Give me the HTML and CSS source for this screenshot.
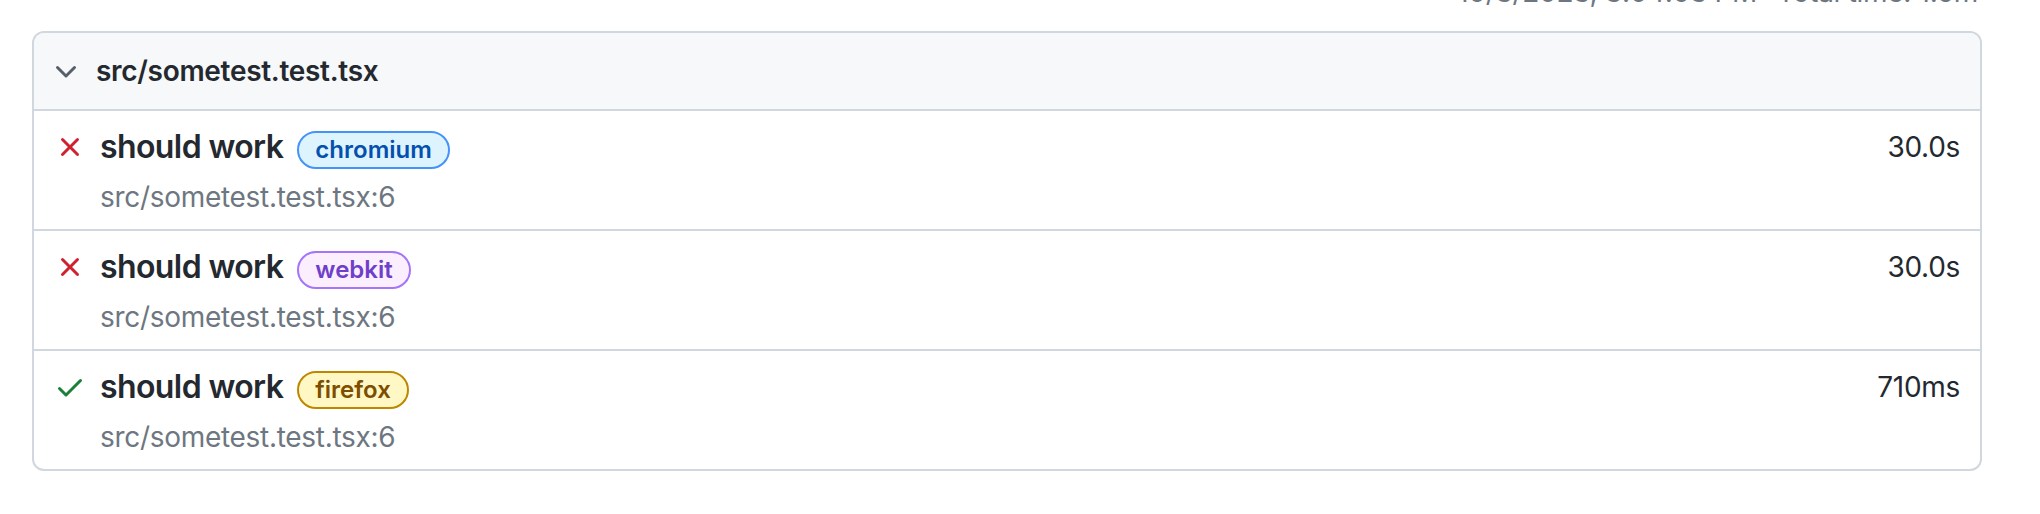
FILE: index.html
```html
<!DOCTYPE html>
<html lang="en">
<head>
<meta charset="utf-8">
<title>Test report</title>
<link rel="stylesheet" href="styles.css">
</head>
<body>
<div class="report">
  <div class="topbar">
    <span class="overall-time">10/3/2023, 3:04:03 PM</span>
    <span class="overall-duration">Total time: 1.6m</span>
  </div>
  <div class="file">
    <div class="file-header">
      <svg class="octicon chevron" viewBox="0 0 16 16" width="32" height="32"><path d="M12.78 5.22a.749.749 0 0 1 0 1.06l-4.25 4.25a.749.749 0 0 1-1.06 0L3.220 6.28a.749.749 0 1 1 1.060-1.06L8 8.939l3.72-3.719a.749.749 0 0 1 1.06 0Z"/></svg>
      <span class="file-name">src/sometest.test.tsx</span>
    </div>
    <div class="test">
      <div class="test-line">
        <svg class="octicon status failed" viewBox="0 0 16 16" width="32" height="32"><path d="M3.72 3.72a.75.75 0 0 1 1.06 0L8 6.94l3.22-3.22a.749.749 0 0 1 1.042.018.749.749 0 0 1 .018 1.042L9.06 8l3.22 3.22a.749.749 0 0 1-.018 1.042.749.749 0 0 1-1.042.018L8 9.06l-3.22 3.22a.751.751 0 0 1-1.042-.018.751.751 0 0 1-.018-1.042L6.94 8 3.72 4.78a.75.75 0 0 1 0-1.06Z"/></svg>
        <div class="title-group">
          <span class="test-title">should work</span>
          <span class="label label-blue">chromium</span>
        </div>
        <span class="duration">30.0s</span>
      </div>
      <div class="test-details">src/sometest.test.tsx:6</div>
    </div>
    <div class="test">
      <div class="test-line">
        <svg class="octicon status failed" viewBox="0 0 16 16" width="32" height="32"><path d="M3.72 3.72a.75.75 0 0 1 1.06 0L8 6.94l3.22-3.22a.749.749 0 0 1 1.042.018.749.749 0 0 1 .018 1.042L9.06 8l3.22 3.22a.749.749 0 0 1-.018 1.042.749.749 0 0 1-1.042.018L8 9.06l-3.22 3.22a.751.751 0 0 1-1.042-.018.751.751 0 0 1-.018-1.042L6.94 8 3.72 4.78a.75.75 0 0 1 0-1.06Z"/></svg>
        <div class="title-group">
          <span class="test-title">should work</span>
          <span class="label label-purple">webkit</span>
        </div>
        <span class="duration">30.0s</span>
      </div>
      <div class="test-details">src/sometest.test.tsx:6</div>
    </div>
    <div class="test">
      <div class="test-line">
        <svg class="octicon status passed" viewBox="0 0 16 16" width="32" height="32"><path d="M13.78 4.22a.75.75 0 0 1 0 1.06l-7.25 7.25a.75.75 0 0 1-1.06 0L2.22 9.28a.751.751 0 0 1 .018-1.042.751.751 0 0 1 1.042-.018L6 10.94l6.72-6.72a.75.75 0 0 1 1.06 0Z"/></svg>
        <div class="title-group">
          <span class="test-title">should work</span>
          <span class="label label-yellow">firefox</span>
        </div>
        <span class="duration">710ms</span>
      </div>
      <div class="test-details">src/sometest.test.tsx:6</div>
    </div>
  </div>
</div>
</body>
</html>
```
FILE: styles.css
```css
html, body {
  margin: 0;
  padding: 0;
  background: #ffffff;
}

body {
  font-family: Inter, "Noto Sans", "Liberation Sans", sans-serif;
  font-size: 28px;
  letter-spacing: -0.3px;
  color: #24292f;
}

.report {
  width: 1950px;
  margin-left: 32px;
}

.topbar {
  display: flex;
  justify-content: flex-end;
  gap: 20px;
  line-height: 28px;
  margin-top: -22px;
  padding-right: 4px;
  color: #6e7781;
}

.file {
  margin-top: 25px;
  border: 2px solid #d0d7de;
  border-radius: 12px;
  overflow: hidden;
}

.file-header {
  display: flex;
  align-items: center;
  height: 76px;
  padding: 0 16px;
  background: #f6f8fa;
  border-bottom: 2px solid #d0d7de;
  font-weight: 600;
}

.octicon {
  flex: none;
  fill: currentColor;
  margin-right: 14px;
}

.chevron {
  color: #57606a;
  margin-top: 2px;
}

.test {
  padding: 4px 20px 14px 20px;
  border-bottom: 2px solid #d0d7de;
}

.test:last-child {
  border-bottom: none;
}

.test-line {
  display: flex;
  align-items: center;
  height: 64px;
}

.status.failed {
  color: #cf222e;
}

.status.passed {
  color: #1a7f37;
}

.title-group {
  display: flex;
  align-items: baseline;
  flex: 1;
}

.test-title {
  font-size: 32px;
  font-weight: 600;
  letter-spacing: -0.6px;
  line-height: 64px;
}

.label {
  margin-left: 14px;
  padding: 0 16px;
  font-size: 24px;
  font-weight: 600;
  letter-spacing: 0;
  line-height: 34px;
  border: 2px solid transparent;
  border-radius: 40px;
}

.label-blue {
  background: #ddf4ff;
  color: #0550ae;
  border-color: #4493f8;
}

.label-purple {
  background: #fbefff;
  color: #6e40c9;
  border-color: #a475f9;
}

.label-yellow {
  background: #fff8c5;
  color: #7d4e00;
  border-color: #bf8700;
}

.duration {
  min-width: 100px;
  text-align: right;
  line-height: 64px;
}

.test-details {
  padding-left: 46px;
  line-height: 36px;
  color: #6e7781;
}
```
